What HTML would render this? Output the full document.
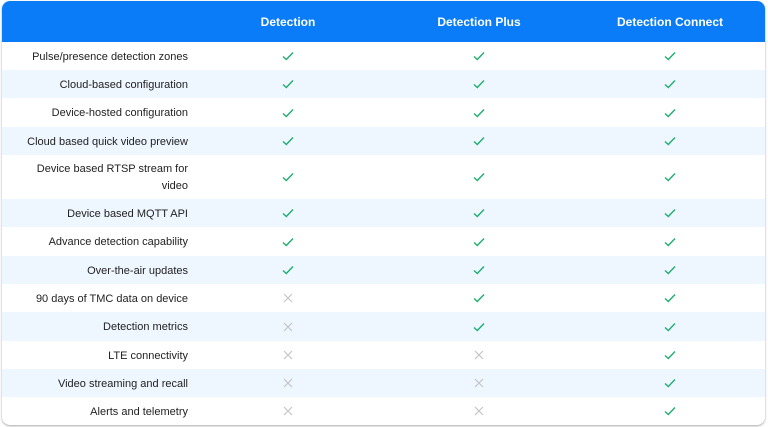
<!DOCTYPE html><html><head><style>
body{margin:0;width:768px;height:427px;background:#fff;overflow:hidden;font-family:"Liberation Sans",sans-serif}
.t{position:absolute;left:2px;top:1px;width:763px;height:424px;border-radius:8px;overflow:hidden;box-shadow:0 1px 2px rgba(0,0,0,.35);background:#fff}
.h{position:absolute;left:0;top:0;width:100%;height:41px;background:#0a7cf7;color:#fff;font-weight:bold;font-size:12px}
.h span{position:absolute;top:14px;transform:translateX(-50%);white-space:nowrap}
.r{position:absolute;left:0;width:100%}
.r.b{background:#eef6ff}
.l{position:absolute;right:577px;text-align:right;font-size:11px;color:#222;line-height:17px;width:180px}
.i{position:absolute;transform:translate(-50%,-50%)}
</style></head><body><div class="t">
<div class="h"><span style="left:286px">Detection</span><span style="left:477px">Detection Plus</span><span style="left:668px">Detection Connect</span></div>
<div id="rows"></div>
</div>
<script>
var rows=[["Pulse/presence detection zones",41,69,1,1,1],["Cloud-based configuration",69,97,1,1,1],["Device-hosted configuration",97,126,1,1,1],["Cloud based quick video preview",126,154,1,1,1],["Device based RTSP stream for<br>video",154,198,1,1,1],["Device based MQTT API",198,226,1,1,1],["Advance detection capability",226,255,1,1,1],["Over-the-air updates",255,283,1,1,1],["90 days of TMC data on device",283,311,0,1,1],["Detection metrics",311,340,0,1,1],["LTE connectivity",340,368,0,0,1],["Video streaming and recall",368,396,0,0,1],["Alerts and telemetry",396,424,0,0,1]];
var ck='<svg width="12" height="10" viewBox="0 0 12 10"><path d="M1 5.5L4.3 8.5L11 1.5" fill="none" stroke="#1fae6e" stroke-width="1.4"/></svg>';
var x='<svg width="10" height="10" viewBox="0 0 10 10"><path d="M1 1L9 9M9 1L1 9" fill="none" stroke="#c4c4c4" stroke-width="1.2"/></svg>';
var h='';rows.forEach(function(r,k){var hh=r[2]-r[1];h+='<div class="r'+(k%2?' b':'')+'" style="top:'+r[1]+'px;height:'+hh+'px"><div class="l" style="top:'+(hh/2+1-(r[0].indexOf('<br>')>0?17:8.5))+'px">'+r[0]+'</div>';[286,477,668].forEach(function(c,j){h+='<div class="i" style="left:'+c+'px;top:'+(hh/2+1)+'px">'+(r[3+j]?ck:x)+'</div>'});h+='</div>'});
document.getElementById('rows').innerHTML=h;
</script></body></html>
